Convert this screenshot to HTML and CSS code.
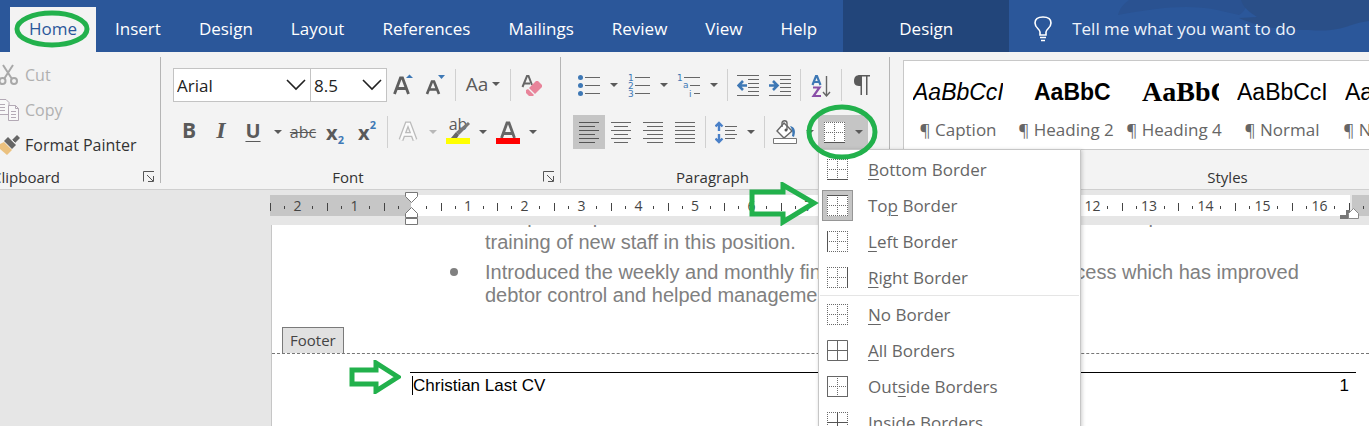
FILE: index.html
```html
<!DOCTYPE html>
<html lang="en">
<head>
<meta charset="utf-8">
<title>Christian Last CV - Word</title>
<link rel="stylesheet" href="styles.css">
</head>
<body>

<svg class="defs" aria-hidden="true">
  <symbol id="arrow" viewBox="0 0 8 4"><path d="M0 0h8L4 4z" fill="currentColor"/></symbol>
  <symbol id="launcher" viewBox="0 0 12 12">
    <path d="M.5 10.500V.5H11M4 4l6 6M10.500 5v5.500H5" fill="none" stroke="#555"/>
  </symbol>
  <symbol id="grid" viewBox="0 0 21 21">
    <rect width="21" height="21" fill="#fff"/>
    <path d="M0 .5h21M0 10.500h21M0 20.500h21M.5 0v21M10.500 0v21M20.500 0v21" fill="none" stroke="#6a6a6a" stroke-dasharray="1 1"/>
  </symbol>
  <symbol id="chevron" viewBox="0 0 20 12"><path d="M1 1l9 9 9-9" fill="none" stroke="#222" stroke-width="1.600"/></symbol>
</svg>

<header class="tabbar">
  <svg class="clouds" viewBox="0 0 252 52" aria-hidden="true">
    <path d="M1 15C3 7 8 3 12 0h115c3 6 2 11-5 15l-22-5C70 4 40 8 1 15z" fill="#2a5291"/>
    <path d="M124 0h128v21c-20 2-26 12-60 9-30-1-45-1-70-12l18-1c-8-5-14-10-16-17z" fill="#2a4f88"/>
  </svg>
  <nav class="tabs">
    <a class="tab active" href="#home">Home</a>
    <a class="tab" href="#insert">Insert</a>
    <a class="tab" href="#design">Design</a>
    <a class="tab" href="#layout">Layout</a>
    <a class="tab" href="#references">References</a>
    <a class="tab" href="#mailings">Mailings</a>
    <a class="tab" href="#review">Review</a>
    <a class="tab" href="#view">View</a>
    <a class="tab" href="#help">Help</a>
    <a class="tab context" href="#footer-design">Design</a>
  </nav>
  <label class="tellme">
    <svg width="20" height="26" viewBox="0 0 20 26" fill="none" stroke="#fff" stroke-width="1.600">
      <path d="M7 19v-3c0-3-5-4-5-9C2 3 5 1 10 1s8 2 8 6c0 5-5 6-5 9v3zM7 21.500h6M8 24.500h4"/>
    </svg>
    <input type="text" placeholder="Tell me what you want to do" aria-label="Tell me what you want to do">
  </label>
  <svg class="mark mark-home" viewBox="0 0 76 38" aria-hidden="true">
    <ellipse cx="38" cy="19" rx="35" ry="16"/>
  </svg>
</header>

<section class="ribbon">

  <div class="group clipboard">
    <button class="clip off">
      <svg width="20" height="24" viewBox="0 0 20 24" fill="none" stroke="#a8a8a8" stroke-width="2">
        <path d="M3 2l9 14M13 2L4 16"/><circle cx="2.500" cy="18" r="3"/><circle cx="14" cy="18" r="3"/>
      </svg>Cut
    </button>
    <button class="clip off">
      <svg width="20" height="24" viewBox="0 0 20 24" fill="#f8f8f8" stroke="#b3a9b5">
        <path d="M-4 1.500H6l3 3v12H-4z"/><path d="M8.500 7.500h7l3 3v12h-10z"/>
        <path d="M15.500 7.500v3h3M11 13.500h5M11 16.500h5M11 19.500h5M0 6.500h5M0 9.500h5M0 12.500h5" fill="none"/>
      </svg>Copy
    </button>
    <button class="clip">
      <svg width="20" height="24" viewBox="0 0 20 24">
        <path d="M0 11l4-2 8 8-5 5-7-6z" fill="#ebc17f"/>
        <path d="M4 8l4-4 8 8-4 4z" fill="#666"/><path d="M12 7l5-5 3 3-5 5z" fill="#666"/><path d="M10 5l6 6" stroke="#f3f3f3"/>
      </svg>Format Painter
    </button>
    <div class="group-foot"><span class="group-name">Clipboard</span>
      <button class="launch" aria-label="Clipboard settings"><svg width="12" height="12"><use href="#launcher"/></svg></button></div>
  </div>

  <div class="group font">
    <div class="row">
      <div class="combo family">
        <select aria-label="Font"><option>Arial</option></select>
        <svg width="20" height="12"><use href="#chevron"/></svg>
      </div>
      <div class="combo size">
        <select aria-label="Font size"><option>8.5</option></select>
        <svg width="20" height="12"><use href="#chevron"/></svg>
      </div>
      <button class="tool" aria-label="Grow font">
        <svg width="20" height="24" viewBox="0 0 20 24"><path d="M1.500 21L7.500 5h2l6 16M4 15.500h9" fill="none" stroke="#5e5e5e" stroke-width="2.800"/><path d="M13 5l3.500-3.500L20 5z" fill="#3e78b5"/></svg>
      </button>
      <button class="tool" aria-label="Shrink font">
        <svg width="20" height="24" viewBox="0 0 20 24"><path d="M2 21L7 8.500h2L14 21M4 16.500h8" fill="none" stroke="#5e5e5e" stroke-width="2.600"/><path d="M13 2h7l-3.500 4z" fill="#3e78b5"/></svg>
      </button>
      <span class="sep"></span>
      <button class="tool case">Aa<svg width="8" height="4"><use href="#arrow"/></svg></button>
      <span class="sep"></span>
      <button class="tool" aria-label="Clear formatting">
        <svg width="22" height="24" viewBox="0 0 22 24"><path d="M2.500 14L7 3h1.500L12 12M4 10.500h6" fill="none" stroke="#666" stroke-width="2"/>
          <path d="M16 8h2l4 4v2l-7 7-6-6z" fill="#e8849a"/><path d="M8 16l6 6-1 1h-4l-3-3v-3z" fill="#e8849a"/></svg>
      </button>
    </div>
    <div class="row">
      <button class="tool bold">B</button>
      <button class="tool italic">I</button>
      <button class="tool split underline"><span>U</span><svg width="8" height="4"><use href="#arrow"/></svg></button>
      <button class="tool strike">abc</button>
      <button class="tool script">x<sub>2</sub></button>
      <button class="tool script">x<sup>2</sup></button>
      <span class="sep"></span>
      <button class="tool split faded" aria-label="Text effects">
        <span><svg width="20" height="24" viewBox="0 0 20 24"><path d="M3 20L9 4h2l6 16M6 14.500h8" fill="none" stroke="#bbb" stroke-width="5"/><path d="M3 20L9 4h2l6 16M6 14.500h8" fill="none" stroke="#fbfbfb" stroke-width="2.400"/></svg></span>
        <svg width="8" height="4"><use href="#arrow"/></svg>
      </button>
      <button class="tool split" aria-label="Highlight colour">
        <span class="hl">ab<svg width="25" height="24" viewBox="0 0 25 24"><path d="M22 2l2 2-11 11-3-3z" fill="#777"/><path d="M10 12l3 3-2 3H5z" fill="#666"/><path d="M0 18h24v6H0z" fill="#ff0"/></svg></span>
        <svg width="8" height="4"><use href="#arrow"/></svg>
      </button>
      <button class="tool split" aria-label="Font colour">
        <span><svg width="24" height="24" viewBox="0 0 24 24"><path d="M5.500 18L11 3h2l5.500 15M8 13.500h8" fill="none" stroke="#666" stroke-width="2.800"/><path d="M0 18h24v6H0z" fill="red"/></svg></span>
        <svg width="8" height="4"><use href="#arrow"/></svg>
      </button>
    </div>
    <div class="group-foot"><span class="group-name">Font</span>
      <button class="launch" aria-label="Font settings"><svg width="12" height="12"><use href="#launcher"/></svg></button></div>
  </div>

  <div class="group paragraph">
    <div class="row">
      <button class="tool split" aria-label="Bullets">
        <span><svg width="22" height="24" viewBox="0 0 22 24"><path d="M7 4.500h15M7 12.500h15M7 20.500h15" stroke="#666"/><g fill="#3e78b5"><circle cx="2.500" cy="4.500" r="2.500"/><circle cx="2.500" cy="12.500" r="2.500"/><circle cx="2.500" cy="20.500" r="2.500"/></g></svg></span>
        <svg width="8" height="4"><use href="#arrow"/></svg>
      </button>
      <button class="tool split" aria-label="Numbering">
        <span><svg class="digits" width="22" height="24" viewBox="0 0 22 24"><path d="M7 4.500h15M7 12.500h15M7 20.500h15" stroke="#666"/><text x="0" y="8">1</text><text x="0" y="16">2</text><text x="0" y="24">3</text></svg></span>
        <svg width="8" height="4"><use href="#arrow"/></svg>
      </button>
      <button class="tool split" aria-label="Multilevel list">
        <span><svg class="digits" width="24" height="24" viewBox="0 0 24 24"><path d="M7 4.500h16M13 12.500h10M17 20.500h6" stroke="#666"/><text x="0" y="8">1</text><text x="6" y="15">a</text><text x="12" y="24">i</text></svg></span>
        <svg width="8" height="4"><use href="#arrow"/></svg>
      </button>
      <span class="sep"></span>
      <button class="tool" aria-label="Decrease indent">
        <svg width="22" height="24" viewBox="0 0 22 24"><path d="M0 2.500h22M11 6.500h11M11 10.500h11M11 14.500h11M11 18.500h11M0 22.500h22" stroke="#666"/><path d="M10 12.500H2M6 8l-4.500 4.500L6 17" fill="none" stroke="#3e78b5" stroke-width="2.600"/></svg>
      </button>
      <button class="tool" aria-label="Increase indent">
        <svg width="22" height="24" viewBox="0 0 22 24"><path d="M0 2.500h22M11 6.500h11M11 10.500h11M11 14.500h11M11 18.500h11M0 22.500h22" stroke="#666"/><path d="M0 12.500h8M4 8l4.500 4.500L4 17" fill="none" stroke="#3e78b5" stroke-width="2.600"/></svg>
      </button>
      <span class="sep"></span>
      <button class="tool" aria-label="Sort">
        <svg width="20" height="24" viewBox="0 0 20 24" fill="none"><path d="M1.500 12L5 3h1l3.500 9M3 9h5" stroke="#3e78b5" stroke-width="2.200"/><path d="M2 14.500h6.500L2.500 23H10" stroke="#8a4fa8" stroke-width="2.200"/><path d="M15.500 3v20M12 19l3.500 4 3.500-4" stroke="#666" stroke-width="1.400"/></svg>
      </button>
      <span class="sep"></span>
      <button class="tool" aria-label="Show paragraph marks">
        <svg width="16" height="24" viewBox="0 0 16 24"><path d="M0 8c0-4 2-6 6-6h10v1.500h-2.500V22H12V3.500H8V22H6.500v-9C2 13 0 12 0 8z" fill="#5a5a5a"/></svg>
      </button>
    </div>
    <div class="row">
      <button class="tool pressed" aria-label="Align left">
        <svg width="20" height="24" viewBox="0 0 20 24"><path d="M0 2.500h20M0 6.500h16M0 10.500h20M0 14.500h16M0 18.500h20M0 22.500h16" stroke="#555"/></svg>
      </button>
      <button class="tool" aria-label="Centre">
        <svg width="20" height="24" viewBox="0 0 20 24"><path d="M0 2.500h20M3 6.500h14M0 10.500h20M3 14.500h14M0 18.500h20M3 22.500h14" stroke="#666"/></svg>
      </button>
      <button class="tool" aria-label="Align right">
        <svg width="20" height="24" viewBox="0 0 20 24"><path d="M0 2.500h20M4 6.500h16M0 10.500h20M4 14.500h16M0 18.500h20M4 22.500h16" stroke="#666"/></svg>
      </button>
      <button class="tool" aria-label="Justify">
        <svg width="20" height="24" viewBox="0 0 20 24"><path d="M0 2.500h20M0 6.500h20M0 10.500h20M0 14.500h20M0 18.500h20M0 22.500h20" stroke="#666"/></svg>
      </button>
      <span class="sep"></span>
      <button class="tool split" aria-label="Line spacing">
        <span><svg width="22" height="24" viewBox="0 0 22 24"><path d="M10 6.500h12M10 10.500h10M10 14.500h12M10 18.500h10" stroke="#666"/><path d="M4 3v8M4 14v8M.5 6.500L4 3l3.500 3.500M.5 18.500L4 22l3.500-3.500" fill="none" stroke="#4a80c8" stroke-width="2.400"/></svg></span>
        <svg width="8" height="4"><use href="#arrow"/></svg>
      </button>
      <span class="sep"></span>
      <button class="tool split shading" aria-label="Shading">
        <span><svg width="24" height="24" viewBox="0 0 24 24"><path d="M11 3l8 8-8 7-7-7z" fill="#fff" stroke="#666" stroke-width="1.400"/><path d="M9 7V3c0-3 5-3 5 0v7" fill="none" stroke="#666" stroke-width="1.400"/><circle cx="13" cy="10" r="1.500" fill="#555"/><path d="M17 6c5 1 6 5 4 11l-2-1c1-4 0-7-2-10z" fill="#3e78b5"/><path d="M.5 18.500h23v5H.5z" fill="#fff" stroke="#777"/></svg></span>
        <svg width="8" height="4"><use href="#arrow"/></svg>
      </button>
      <div class="borders">
        <button class="tool split pressed" aria-label="Borders" aria-expanded="true">
          <span><svg width="21" height="21" viewBox="0 0 21 21"><use href="#grid"/><path d="M0 20.500h21" stroke="#555"/></svg></span>
          <svg width="8" height="4"><use href="#arrow"/></svg>
        </button>
        <div class="menu">
          <button class="item"><i><svg width="21" height="21" viewBox="0 0 21 21"><use href="#grid"/><path d="M0 20.500h21" stroke="#555"/></svg></i><span><u>B</u>ottom Border</span></button>
          <button class="item checked"><i><svg width="21" height="21" viewBox="0 0 21 21"><use href="#grid"/><path d="M0 .5h21" stroke="#555"/></svg></i><span>To<u>p</u> Border</span></button>
          <button class="item"><i><svg width="21" height="21" viewBox="0 0 21 21"><use href="#grid"/><path d="M.5 0v21" stroke="#555"/></svg></i><span><u>L</u>eft Border</span></button>
          <button class="item"><i><svg width="21" height="21" viewBox="0 0 21 21"><use href="#grid"/><path d="M20.500 0v21" stroke="#555"/></svg></i><span><u>R</u>ight Border</span></button>
          <hr>
          <button class="item"><i><svg width="21" height="21" viewBox="0 0 21 21"><use href="#grid"/></svg></i><span><u>N</u>o Border</span></button>
          <button class="item"><i><svg width="21" height="21" viewBox="0 0 21 21"><path d="M.5.5h20v20H.5zM.5 10.500h20M10.500.5v20" fill="#fff" stroke="#666"/></svg></i><span><u>A</u>ll Borders</span></button>
          <button class="item"><i><svg width="21" height="21" viewBox="0 0 21 21"><use href="#grid"/><path d="M.5.5h20v20H.5z" fill="none" stroke="#666"/></svg></i><span>Out<u>s</u>ide Borders</span></button>
          <button class="item"><i><svg width="21" height="21" viewBox="0 0 21 21"><use href="#grid"/><path d="M0 10.500h21M10.500 0v21" stroke="#555"/></svg></i><span><u>I</u>nside Borders</span></button>
        </div>
        <svg class="mark mark-borders" viewBox="0 0 72 56" aria-hidden="true"><ellipse cx="36" cy="28" rx="33" ry="25"/></svg>
        <svg class="mark mark-top" viewBox="0 0 70 44" aria-hidden="true"><path d="M3 10h31V3l31 18-31 19v-8H3z"/></svg>
      </div>
    </div>
    <div class="group-foot"><span class="group-name">Paragraph</span>
      <button class="launch" aria-label="Paragraph settings"><svg width="12" height="12"><use href="#launcher"/></svg></button></div>
  </div>

  <div class="group styles">
    <div class="gallery">
      <button class="style"><span class="sample caption">AaBbCcI</span><span>¶ Caption</span></button>
      <button class="style"><span class="sample heading2">AaBbC</span><span>¶ Heading 2</span></button>
      <button class="style"><span class="sample heading4">AaBbC</span><span>¶ Heading 4</span></button>
      <button class="style"><span class="sample">AaBbCcI</span><span>¶ Normal</span></button>
      <button class="style"><span class="sample">AaBbCcI</span><span>¶ No Spac...</span></button>
    </div>
    <div class="group-foot"><span class="group-name">Styles</span></div>
  </div>
</section>

<main class="workspace">
  <div class="ruler">
    <span>2</span><span>1</span>
    <span class="zero"><svg width="13" height="33" viewBox="0 0 13 33"><path d="M.5.5h12v4l-6 6-6-6zM6.500 15.500l6 6v4H.5v-4zM.5 26.500h12v6H.5z" fill="#fff" stroke="#777"/></svg></span>
    <span>1</span><span>2</span><span>3</span><span>4</span><span>5</span><span>6</span><span>7</span><span>8</span>
    <span>9</span><span>10</span><span>11</span><span>12</span><span>13</span><span>14</span><span>15</span><span>16</span>
    <span class="end">17<svg width="20" height="12" viewBox="0 0 20 12"><path d="M0 8h6V3h4v9H0z" fill="#777"/><path d="M8.500 6.500l5-5 5 5v5h-10z" fill="#fff" stroke="#888"/></svg></span>
  </div>

  <article class="page">
    <p class="scrolled">also plan to provide hands-on assistance to all new staff and which need a place in this team</p>
    <p>training of new staff in this position.</p>
    <ul>
      <li>Introduced the weekly and monthly financial and debt reporting process which has improved<br>
        debtor control and helped management</li>
    </ul>
    <div class="footer-edge"><span class="footer-tag">Footer</span></div>
    <footer class="doc-footer">
      <span class="caret">Christian Last CV</span><span>1</span>
      <svg class="mark mark-footer" viewBox="0 0 52 34" aria-hidden="true"><path d="M3 10h24V3l22 14-22 14v-7H3z"/></svg>
    </footer>
  </article>
</main>

</body>
</html>
```
FILE: styles.css
```css
* {
    box-sizing: border-box;
}

body {
    margin: 0;
    height: 100vh;
    display: flex;
    flex-direction: column;
    overflow: hidden;
    background-color: #e6e6e6;
    font-family: "Open Sans", "Noto Sans", sans-serif;
    font-size: 16px;
    color: #333;
}

button, input, select {
    font: inherit;
    color: inherit;
    border: none;
    background: none;
    padding: 0;
    margin: 0;
}

svg {
    flex: none;
    display: block;
}

.defs {
    position: absolute;
    width: 0;
    height: 0;
}

/* green annotations drawn over the window */
.mark {
    position: absolute;
    z-index: 5;
    fill: none;
    stroke: #22b14c;
    stroke-width: 5px;
    pointer-events: none;
}

.mark-home {
    left: 14px;
    top: 10px;
    width: 76px;
}

.mark-borders {
    left: -12px;
    top: -11px;
    width: 72px;
}

.mark-top {
    left: -69px;
    top: 67px;
    width: 70px;
}

.mark-footer {
    left: -61px;
    top: -13px;
    width: 52px;
}

/* tab bar */
.tabbar {
    position: relative;
    flex: none;
    display: flex;
    height: 52px;
    padding: 7px 0 0 10px;
    background-color: #2b579a;
    color: #fff;
    font-size: 17px;
}

.clouds {
    position: absolute;
    right: 0;
    top: 0;
    width: 252px;
}

.tabs {
    display: flex;
}

.tab {
    display: flex;
    align-items: center;
    padding: 0 19px 2px;
    color: #fff;
    text-decoration: none;
}

.tab.active {
    background-color: #f3f3f3;
    color: #2b579a;
}

.tab.context {
    margin: -7px 0 0 7px;
    padding: 7px 56px 2px;
    background-color: #22457a;
}

.tellme {
    position: relative;
    flex: 1;
    display: flex;
    align-items: center;
    gap: 19px;
    padding: 0 0 2px 24px;
}

.tellme input {
    flex: 1;
}

.tellme input::placeholder {
    color: #eef3fa;
    opacity: 1;
}

/* ribbon */
.ribbon {
    flex: none;
    display: flex;
    height: 138px;
    padding: 5px 0 6px;
    background-color: #f3f3f3;
    border-bottom: 1px solid #cfcfcf;
}

.group {
    flex: none;
    display: flex;
    flex-direction: column;
    padding: 11px 5px 0 12px;
    border-right: 1px solid #b5b5b5;
}

.clipboard {
    width: 161px;
    padding-top: 0;
    padding-left: 0;
}

.font {
    width: 400px;
}

.paragraph {
    width: 329px;
}

.styles {
    width: 680px;
    padding-top: 3px;
    padding-left: 13px;
}

.group-foot {
    display: flex;
    align-items: center;
    height: 12px;
    margin: auto 0 0 -12px;
    font-size: 15px;
    line-height: 12px;
}

.group-name {
    flex: 1;
    padding-right: 8px;
    text-align: center;
}

.clipboard .group-foot {
    margin-left: -8px;
}

.clipboard .group-name {
    text-align: left;
}

.styles .group-name {
    padding-right: 0;
}

.clip {
    display: flex;
    align-items: center;
    gap: 5px;
    height: 35px;
}

.off {
    color: #b0b0b0;
}

.row {
    display: flex;
    height: 34px;
    margin-bottom: 13px;
}

.tool {
    display: flex;
    align-items: center;
    justify-content: center;
    width: 32px;
    height: 34px;
    color: #5a5a5a;
}

.split {
    width: 50px;
    justify-content: flex-start;
}

.split > span {
    display: flex;
    justify-content: center;
    width: 32px;
    margin-right: 5px;
}

.pressed {
    background-color: #c5c5c5;
}

.sep {
    width: 1px;
    margin: 1px 4px;
    background-color: #d0d0d0;
}

.combo {
    display: grid;
    align-items: center;
    background-color: #fff;
    border: 1px solid #c3c3c3;
    font-size: 17px;
}

.combo select, .combo svg {
    grid-area: 1 / 1;
}

.combo select {
    appearance: none;
    height: 32px;
    padding-left: 3px;
    color: #222;
}

.combo svg {
    justify-self: end;
    margin-right: 4px;
    pointer-events: none;
}

.family {
    width: 138px;
}

.size {
    width: 77px;
    margin-left: -1px;
}

.case {
    width: 46px;
    gap: 4px;
    padding-bottom: 3px;
    font-size: 19px;
    font-weight: 500;
}

.bold {
    padding-bottom: 4px;
    font-size: 21px;
    font-weight: bold;
}

.italic {
    padding-bottom: 3px;
    font: italic bold 24px "Liberation Serif", serif;
}

.underline span {
    padding-bottom: 4px;
    font-size: 20px;
    font-weight: bold;
    text-decoration: underline;
    text-decoration-thickness: 1px;
    text-underline-offset: 3px;
}

.strike {
    text-decoration: line-through;
}

.script {
    font-size: 20px;
    font-weight: bold;
}

.script sub, .script sup {
    color: #3e78b5;
    font-size: 11px;
}

.script sub {
    padding-top: 14px;
}

.script sup {
    padding-bottom: 16px;
}

.faded {
    color: #b8b8b8;
}

.split > .hl {
    display: grid;
    font-size: 16px;
    line-height: 9px;
}

.hl svg {
    margin-top: -9px;
}

.digits text {
    font: 9px "DejaVu Sans", sans-serif;
    fill: #3e78b5;
}

.shading {
    width: 49px;
}

/* borders drop-down */
.borders {
    position: relative;
}

.menu {
    position: absolute;
    z-index: 4;
    left: 0;
    top: 34px;
    width: 263px;
    padding: 1px 0;
    background-color: #fff;
    border: 1px solid #c6c6c6;
    box-shadow: 1px 1px 4px rgba(0, 0, 0, 0.2);
}

.menu hr {
    height: 1px;
    margin: 0 1px;
    border: none;
    background-color: #e5e5e5;
}

.item {
    display: flex;
    align-items: center;
    gap: 15px;
    width: 100%;
    height: 36px;
    padding-left: 3px;
    font-size: 17px;
    color: #666;
}

.item i {
    display: grid;
    place-items: center;
    width: 31px;
    height: 31px;
}

.item u {
    text-underline-offset: 3px;
    text-decoration-thickness: 1px;
}

.checked i {
    background-color: #c5c5c5;
    border: 1px solid #969696;
}

/* style gallery */
.gallery {
    display: flex;
    height: 90px;
    background-color: #fff;
    border: 1px solid #c8c8c8;
    overflow: hidden;
}

.style {
    flex: none;
    display: flex;
    flex-direction: column;
    align-items: center;
    gap: 12px;
    width: 108px;
    padding-top: 16px;
    font-size: 17px;
    line-height: 22px;
    white-space: nowrap;
    color: #666;
}

.sample {
    width: 90px;
    height: 30px;
    overflow: hidden;
    font: 23px/30px "Liberation Sans", sans-serif;
    text-align: left;
    white-space: nowrap;
    color: #000;
}

.caption {
    font-style: italic;
}

.heading2 {
    padding-left: 13px;
    font-weight: bold;
}

.heading4 {
    padding-left: 13px;
    font: bold 28px/30px "Liberation Serif", serif;
}

/* document */
.workspace {
    flex: 1;
    display: flex;
    flex-direction: column;
    min-height: 0;
    padding: 5px 0 0 270px;
}

.ruler {
    flex: none;
    display: grid;
    grid-template-columns: repeat(5, 57px 57px 57px 56px);
    height: 21px;
    margin-bottom: 9px;
    background: linear-gradient(to right, #c6c6c6 141px, #fff 141px, #fff 1080px, #e6e6e6 1080px, #e6e6e6 1082px, #c6c6c6 1082px);
    font-size: 14px;
    line-height: 22px;
    text-align: center;
    color: #444;
}

.ruler span {
    padding-right: 2px;
    background:
        linear-gradient(#444, #444) 0 8px / 1px 8px no-repeat,
        linear-gradient(#444, #444) 14px 11px / 1px 3px no-repeat,
        linear-gradient(#444, #444) 42px 11px / 1px 3px no-repeat;
}

.zero svg {
    margin: -3px auto 0;
    position: relative;
}

.end {
    position: relative;
}

.end svg {
    position: absolute;
    left: -9px;
    top: 12px;
}

.page {
    flex: 1;
    margin-left: 1px;
    overflow: hidden;
    background-color: #fff;
    border-left: 1px solid #c6c6c6;
    font-family: "Liberation Sans", sans-serif;
}

.page p, .page ul {
    margin: 0 0 7px;
    padding-left: 213px;
    list-style: none;
    font-size: 20px;
    line-height: 23px;
    color: #808080;
    white-space: nowrap;
}

/* line half hidden by the top of the window */
.page .scrolled {
    margin: -20px 0 3px;
}

.page li::before {
    content: "";
    display: inline-block;
    width: 8px;
    height: 8px;
    margin: 0 27px 3px -35px;
    border-radius: 50%;
    background-color: #808080;
}

.footer-edge {
    display: flex;
    margin-top: 20px;
    padding-left: 10px;
    border-bottom: 1px dashed #777;
}

.footer-tag {
    padding: 0 7px;
    background-color: #e1e1e1;
    border: 1px solid #7a7a7a;
    border-bottom: none;
    font: 15px/25px "Open Sans", sans-serif;
    color: #444;
}

.doc-footer {
    position: relative;
    display: flex;
    justify-content: space-between;
    margin: 18px 13px 0 138px;
    padding: 3px 7px 0 2px;
    border-top: 1px solid #000;
    font-size: 17px;
    line-height: 19px;
    color: #000;
}

.caret {
    border-left: 1px solid #000;
}
```
